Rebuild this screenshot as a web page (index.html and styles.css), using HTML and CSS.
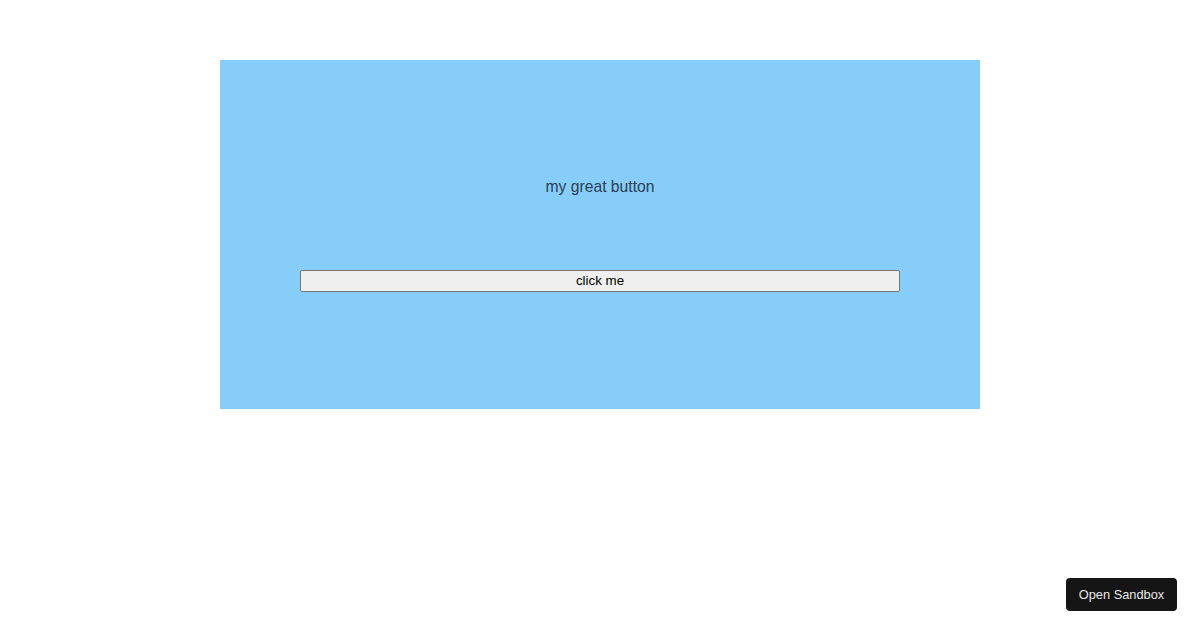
FILE: index.html
```html
<!DOCTYPE html>
<html>
<head>
<meta charset="utf-8">
<link rel="stylesheet" href="styles.css">
</head>
<body>
<div class="box">
  <p class="label">my great button</p>
  <button class="btn">click me</button>
</div>
<a class="sandbox">Open Sandbox</a>
</body>
</html>
```
FILE: styles.css
```css
html, body {
  margin: 0;
  padding: 0;
  background: #fff;
}
body {
  font-family: "Liberation Sans", Arial, sans-serif;
}
.box {
  width: 760px;
  height: 349px;
  margin: 60px auto 0;
  background: #87cdfa;
  display: flex;
  flex-direction: column;
  align-items: center;
  padding-top: 118px;
  box-sizing: border-box;
}
.label {
  margin: 0;
  font-size: 15.7px;
  line-height: 18px;
  color: #2c3e50;
}
.btn {
  margin-top: 74px;
  width: 600px;
  height: 22px;
  font-family: "Liberation Sans", Arial, sans-serif;
  font-size: 13.33px;
  line-height: 15px;
  color: #000;
  background: #efefef;
  border: 1px solid #767676;
  border-radius: 2px;
  padding: 0 6px 2px;
}
.sandbox {
  position: fixed;
  right: 23px;
  bottom: 19px;
  width: 111px;
  height: 33px;
  box-sizing: border-box;
  background: #151515;
  color: #e8e8e8;
  border-radius: 4px;
  font-size: 12.8px;
  display: flex;
  align-items: center;
  justify-content: center;
}
```
